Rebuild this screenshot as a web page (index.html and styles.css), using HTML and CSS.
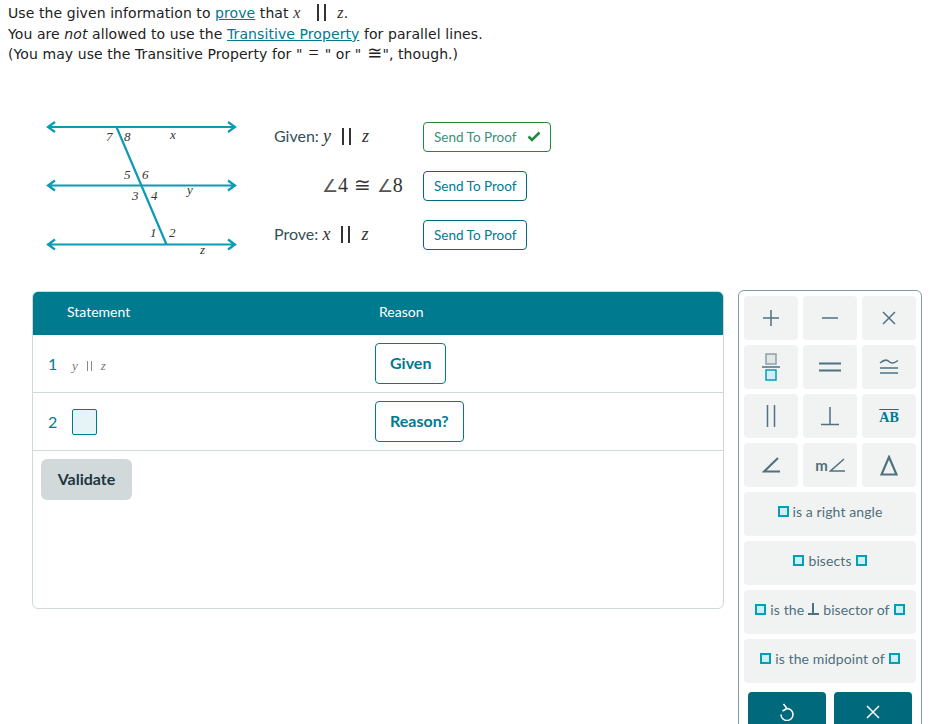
FILE: index.html
```html
<!DOCTYPE html>
<html lang="en">
<head>
    <meta charset="UTF-8">
    <meta name="viewport" content="width=device-width, initial-scale=1.0">
    <title>Parallel Lines Proof</title>
    <link rel="stylesheet" href="styles.css">
</head>
<body>
    <div class="intro">
        <div>Use the given information to <a href="#">prove</a> that <span class="math">x</span><span class="par par-intro"></span><span class="math">z</span>.</div>
        <div>You are <em>not</em> allowed to use the <a href="#">Transitive Property</a> for parallel lines.</div>
        <div>(You may use the Transitive Property for "<span class="sym">=</span>" or "<span class="sym sym-cong">≅</span>", though.)</div>
    </div>

    <div class="problem">
        <svg class="figure" width="226" height="160" viewBox="30 110 226 160">
            <g class="fig-lines">
                <path d="M48 127H235M55 122L48 127L55 132M228 122L235 127L228 132"/>
                <path d="M48 185.500H235M55 180.500L48 185.500L55 190.500M228 180.500L235 185.500L228 190.500"/>
                <path d="M48 244.500H235M55 239.500L48 244.500L55 249.500M228 239.500L235 244.500L228 249.500"/>
                <path d="M116.500 127L166.500 244.500"/>
            </g>
            <g class="fig-labels">
                <text x="106" y="141">7</text>
                <text x="124" y="141">8</text>
                <text x="170" y="139">x</text>
                <text x="124" y="179">5</text>
                <text x="142" y="179">6</text>
                <text x="187" y="194">y</text>
                <text x="132" y="200">3</text>
                <text x="151" y="200">4</text>
                <text x="150" y="237">1</text>
                <text x="169" y="237">2</text>
                <text x="200" y="254">z</text>
            </g>
        </svg>

        <div class="facts">
            <div class="fact-text">Given: <span class="math math-big">y</span><span class="par"></span><span class="math math-big">z</span></div>
            <div><button class="send send-done">Send To Proof
                <svg width="14" height="11" viewBox="0 0 14 11"><path d="M1.500 5.500L5 9L12.500 1.500" fill="none" stroke="#1f8a3d" stroke-width="2.500"/></svg>
            </button></div>
            <div class="fact-text fact-indent"><span class="math math-angle"><span class="angle">∠</span>4<span class="cong">≅</span><span class="angle">∠</span>8</span></div>
            <div><button class="send">Send To Proof</button></div>
            <div class="fact-text">Prove: <span class="math math-big">x</span><span class="par"></span><span class="math math-big">z</span></div>
            <div><button class="send">Send To Proof</button></div>
        </div>
    </div>

    <div class="workspace">
        <div class="proof">
            <div class="proof-head">
                <div class="col-statement">Statement</div>
                <div class="col-reason">Reason</div>
            </div>
            <div class="proof-row">
                <div class="col-statement"><span class="num">1</span><span class="stmt">y<span class="par par-small"></span>z</span></div>
                <div class="col-reason"><button class="reason">Given</button></div>
            </div>
            <div class="proof-row">
                <div class="col-statement"><span class="num">2</span><span class="blank"></span></div>
                <div class="col-reason"><button class="reason">Reason?</button></div>
            </div>
            <button class="validate">Validate</button>
        </div>

        <div class="palette">
            <div class="keys">
                <button class="key"><svg width="18" height="18" viewBox="0 0 18 18"><path d="M9 1V17M1 9H17"/></svg></button>
                <button class="key"><svg width="18" height="18" viewBox="0 0 18 18"><path d="M1 9H17" stroke-width="2"/></svg></button>
                <button class="key"><svg width="18" height="18" viewBox="0 0 18 18"><path d="M3 3L15 15M15 3L3 15" stroke-width="2"/></svg></button>

                <button class="key"><svg width="18" height="28" viewBox="0 0 18 28"><rect x="4" y="1" width="10" height="10" fill="#e3e6e7" stroke="#8fa0a6" stroke-width="1.500"/><path d="M0 14H18"/><rect x="4" y="17" width="10" height="10" fill="#cdeff5" stroke="#00a0b8" stroke-width="1.500"/></svg></button>
                <button class="key"><svg width="22" height="10" viewBox="0 0 22 10"><path d="M0 1.500H22M0 8.500H22" class="thick"/></svg></button>
                <button class="key"><svg width="20" height="16" viewBox="0 0 20 16"><path d="M1 4C5 0.500 8 0.500 10 2.500C12 4.500 15 4.500 19 1.500M1 9H19M1 14H19"/></svg></button>

                <button class="key"><svg width="10" height="22" viewBox="0 0 10 22"><path d="M1.500 0V22M8.500 0V22"/></svg></button>
                <button class="key"><svg width="20" height="20" viewBox="0 0 20 20"><path d="M10 1V18.500M1 18.500H19"/></svg></button>
                <button class="key key-ab">AB</button>

                <button class="key"><svg width="18" height="16" viewBox="0 0 18 16"><path d="M16 1L2 14.500H18" class="thick"/></svg></button>
                <button class="key key-mangle">m<svg width="16" height="14" viewBox="0 0 16 14"><path d="M15 1L1.500 13H16"/></svg></button>
                <button class="key"><svg width="18" height="21" viewBox="0 0 18 21"><path d="M9 2L16.500 19.500H1.500Z" class="thick"/></svg></button>
            </div>
            <button class="wide"><span class="box"></span> is a right angle</button>
            <button class="wide"><span class="box"></span> bisects <span class="box"></span></button>
            <button class="wide"><span class="box"></span> is the <span class="perp"></span> bisector of <span class="box"></span></button>
            <button class="wide"><span class="box"></span> is the midpoint of <span class="box"></span></button>
            <div class="actions">
                <button class="action"><svg width="16" height="18" viewBox="0 0 16 18"><path d="M8 5.500A6 6 0 1 1 2 11.500M4.500 1L8 5.500L3.500 8"/></svg></button>
                <button class="action"><svg width="14" height="14" viewBox="0 0 14 14"><path d="M1 1L13 13M13 1L1 13"/></svg></button>
            </div>
        </div>
    </div>
</body>
</html>
```

FILE: styles.css
```css
html, body {
    margin: 0;
    height: 724px;
    overflow: hidden;
}

body {
    font-family: 'Lato', sans-serif;
    background: white;
    color: #1d3640;
}

button {
    font-family: inherit;
    cursor: pointer;
}

.intro {
    font-family: 'DejaVu Sans', sans-serif;
    font-size: 14px;
    line-height: 20.500px;
    letter-spacing: 0.08px;
    color: #222;
    padding: 3px 8px 0;
    height: 68px;
}

.intro a {
    color: #007a8f;
}

.sym {
    font-family: 'Liberation Serif', serif;
    font-size: 18px;
    line-height: 1;
    margin: 0 6px;
}

.sym-cong {
    font-family: 'DejaVu Sans', sans-serif;
    margin: 0 0 0 6px;
}

.math {
    font-family: 'Liberation Serif', serif;
    font-style: italic;
    font-size: 16px;
    color: #333;
}

.math-big {
    font-size: 18px;
}

.math-angle {
    font-size: 20px;
    font-style: normal;
}

.angle {
    font-family: 'DejaVu Sans', sans-serif;
    font-size: 18px;
    font-weight: 200;
    color: #555;
}

.cong {
    font-family: 'DejaVu Sans', sans-serif;
    margin: 0 6px;
}

.par {
    display: inline-block;
    width: 5px;
    height: 17px;
    margin: 0 11px;
    border-left: 2px solid #333;
    border-right: 2px solid #333;
    vertical-align: -3px;
}

.par-intro {
    margin: 0 11px 0 17px;
}

.par-small {
    width: 3px;
    height: 10px;
    margin: 0 9px;
    border-left: 1px solid #888;
    border-right: 1px solid #888;
    vertical-align: -1px;
}

.problem {
    display: flex;
    height: 220px;
    padding-left: 30px;
}

.figure {
    margin-top: 39px;
    flex: none;
}

.fig-lines path {
    fill: none;
    stroke: #0b9bb3;
    stroke-width: 2.200;
}

.fig-labels text {
    font-family: 'Liberation Serif', serif;
    font-style: italic;
    font-size: 13px;
    fill: #333;
}

.facts {
    display: grid;
    grid-template-columns: 149px auto;
    grid-auto-rows: 30px;
    row-gap: 19px;
    margin: 51px 0 0 18px;
    align-items: center;
}

.fact-text {
    font-size: 16px;
    color: #34505c;
    padding-bottom: 2px;
}

.fact-indent {
    padding-left: 48px;
}

.send {
    display: block;
    height: 30px;
    padding: 0 9px 0 10px;
    font-size: 13.500px;
    color: #007a8f;
    background: white;
    border: 1px solid #00697c;
    border-radius: 4px;
}

.send-done {
    border-color: #1f8a3d;
    color: #3d8f7a;
}

.send-done svg {
    margin-left: 7px;
}

.workspace {
    display: flex;
    align-items: flex-start;
    gap: 14px;
    padding: 0 0 0 32px;
}

.proof {
    width: 692px;
    height: 318px;
    box-sizing: border-box;
    border: 1px solid #cfd8da;
    border-radius: 6px;
    overflow: hidden;
}

.proof-head {
    display: flex;
    align-items: center;
    height: 44px;
    margin: -1px -1px 0;
    padding-bottom: 3px;
    box-sizing: border-box;
    background: #007a8f;
    color: white;
    font-size: 14px;
}

.col-statement {
    width: 347px;
    padding-left: 35px;
    box-sizing: border-box;
}

.proof-row .col-statement {
    padding-left: 16px;
    display: flex;
    align-items: center;
}

.col-reason {
    flex: 1;
}

.proof-row {
    display: flex;
    align-items: center;
    height: 58px;
    box-sizing: border-box;
    border-bottom: 1px solid #cfd8da;
    margin: 0 -1px;
}

.proof-row .col-reason {
    margin-left: -4px;
}

.num {
    width: 24px;
    font-size: 16px;
    color: #007a8f;
}

.stmt {
    font-family: 'Liberation Serif', serif;
    font-style: italic;
    font-size: 13px;
    color: #777;
    margin-top: 5px;
}

.blank {
    width: 25px;
    height: 26px;
    box-sizing: border-box;
    background: #e6f4f8;
    border: 1px solid #007a8f;
    border-radius: 2px;
}

.reason {
    height: 41px;
    padding: 0 14px 2px;
    font-size: 16px;
    font-weight: bold;
    color: #007a8f;
    background: white;
    border: 1px solid #007a8f;
    border-radius: 4px;
}

.validate {
    display: block;
    width: 91px;
    height: 41px;
    margin: 8px 0 0 8px;
    padding-bottom: 4px;
    font-size: 16px;
    font-weight: bold;
    color: #1d3640;
    background: #d2d9db;
    border: none;
    border-radius: 6px;
}

.palette {
    width: 184px;
    height: 460px;
    margin-top: -1px;
    box-sizing: border-box;
    padding: 5px;
    border: 1px solid #7f9ba3;
    border-radius: 6px;
    flex: none;
}

.keys {
    display: grid;
    grid-template-columns: repeat(3, 54px);
    grid-auto-rows: 44px;
    gap: 5px;
}

.key, .wide {
    display: flex;
    align-items: center;
    justify-content: center;
    padding: 0;
    background: #f1f3f3;
    border: none;
    border-radius: 4px;
    color: #4f6f7c;
}

.key svg path {
    fill: none;
    stroke: #4f7280;
    stroke-width: 1.500;
}

.key svg path.thick {
    stroke-width: 2.200;
}

.key-ab {
    padding-top: 3px;
    font-family: 'Liberation Serif', serif;
    font-weight: bold;
    font-size: 14px;
    color: #007a8f;
    text-decoration: overline;
}

.key-mangle {
    font-size: 15px;
    font-weight: bold;
    gap: 1px;
}

.wide {
    width: 172px;
    height: 44px;
    margin-top: 5px;
    padding-bottom: 6px;
    gap: 4px;
    font-size: 14px;
    letter-spacing: 0.1px;
}

.box {
    display: inline-block;
    width: 11px;
    height: 11px;
    box-sizing: border-box;
    background: #cdeff5;
    border: 2px solid #00a0b8;
}

.perp {
    display: inline-block;
    position: relative;
    width: 11px;
    height: 12px;
    box-sizing: border-box;
    border-bottom: 2px solid #4f7280;
}

.perp::before {
    content: "";
    position: absolute;
    left: 4px;
    top: 0;
    width: 2px;
    height: 10px;
    background: #4f7280;
}

.actions {
    display: flex;
    gap: 8px;
    padding: 0 4px;
    margin-top: 9px;
}

.action {
    display: flex;
    align-items: center;
    justify-content: center;
    width: 78px;
    height: 44px;
    padding: 0 0 4px;
    background: #00697c;
    border: none;
    border-radius: 4px;
}

.action path {
    fill: none;
    stroke: white;
    stroke-width: 1.500;
}
```
